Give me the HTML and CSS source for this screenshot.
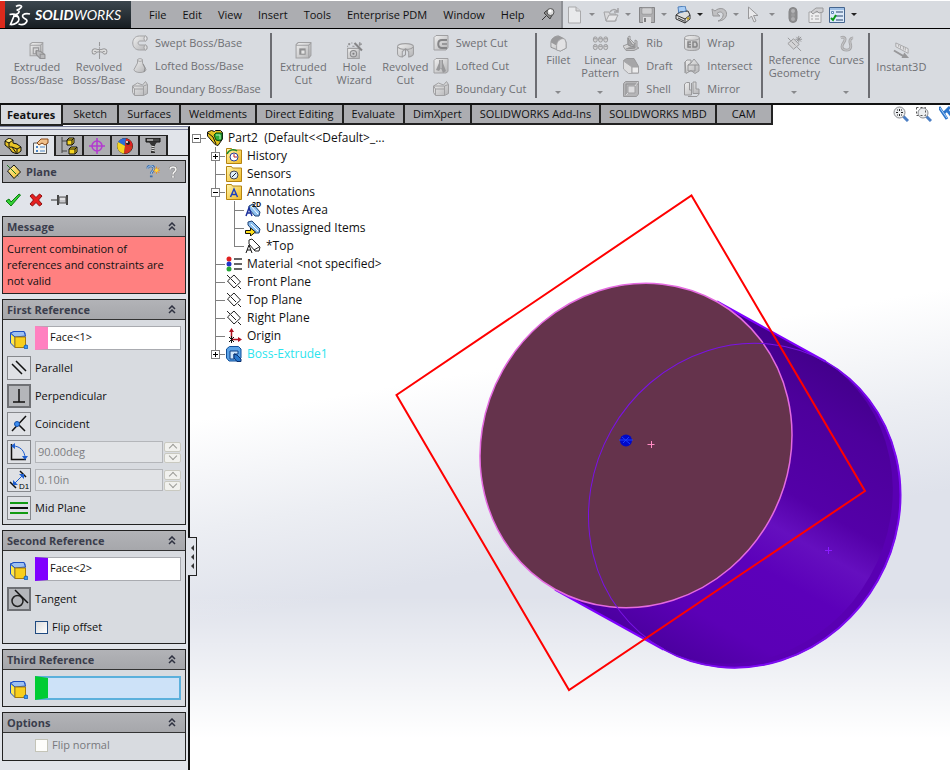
FILE: index.html
```html
<!DOCTYPE html>
<html lang="en">
<head>
  <meta charset="utf-8" />
  <meta name="viewport" content="width=device-width, initial-scale=1.0" />
  <title>SOLIDWORKS</title>
  <link rel="stylesheet" href="styles.css">
</head>
<body>

  <!-- icon sprite -->
  <svg class="sprite" aria-hidden="true">
    <defs>
      <linearGradient id="gGrey" x1="0" y1="0" x2="1" y2="1">
        <stop offset="0" stop-color="#f0f0f0" /><stop offset="1" stop-color="#b4b4b6" />
      </linearGradient>
      <linearGradient id="gGold" x1="0" y1="0" x2="1" y2="1">
        <stop offset="0" stop-color="#fff6b0" /><stop offset="1" stop-color="#f0b820" />
      </linearGradient>
    </defs>

    <symbol id="extrude" viewBox="0 0 16 16"><path d="M1 2l2-1.500h10v11l-2 1.500H1zM1 3h10v10M11 3l2-2" fill="url(#gGrey)" stroke="#a3a3a5"/><path d="M4 5.500h5v3H6.500V11H4z" fill="#d8d8da" stroke="#98989a"/><path d="M7 8l4 1 4 3v3.500h-4.500L7 12z" fill="#b9b9bb" stroke="#929294"/><path d="M10.500 15.500v-4h4.500" fill="none" stroke="#929294"/></symbol>
    <symbol id="revolve" viewBox="0 0 16 16"><path d="M8 0v4M8 5v1M8 11v5" stroke="#98989a"/><path d="M1 9c0-3 3-3 5-2h4c2-1 5-1 5 2s-3 3-4 1c-1-1-5-1-6 0-1 2-4 2-4-1z" fill="#ddd" stroke="#9a9a9c"/><path d="M8 6v5M3 9h2M11 9h2" stroke="#9a9a9c"/></symbol>
    <symbol id="swept" viewBox="0 0 16 16"><path d="M13.500 1H7.500C-1.500 1-1.500 15 7.500 15h6c2 0 2-5 0-5H8c-2.500 0-2.500-4 0-4h5.500c2-1 2-4 0-5z" fill="url(#gGrey)" stroke="#a2a2a4"/><ellipse cx="13.500" cy="12.500" rx="1.500" ry="2.500" fill="#ddd" stroke="#a2a2a4"/><ellipse cx="13.500" cy="3.500" rx="1.500" ry="2.500" fill="#e6e6e8" stroke="#a2a2a4"/></symbol>
    <symbol id="lofted" viewBox="0 0 16 16"><path d="M5.500 2v3L2 11.500c0 4 12 4 12 0L10.500 5V2z" fill="url(#gGrey)" stroke="#a2a2a4"/><ellipse cx="8" cy="2" rx="2.500" ry="1.300" fill="#e8e8e8" stroke="#a2a2a4"/><path d="M11 6l2 4-1 4" fill="none" stroke="#8f8f91"/></symbol>
    <symbol id="boundary" viewBox="0 0 16 16"><path d="M.5 5h11v9.500h-9l-2-3zM11.500 5l4-1.500v9l-4 2zM.5 5l5-3 5 2 3-3.500 2 3" fill="url(#gGrey)" stroke="#a0a0a2"/><path d="M2.500 14V8h9M.5 5l2 3" fill="none" stroke="#a0a0a2"/></symbol>
    <symbol id="cut" viewBox="0 0 16 16"><path d="M1 2.500L3 .5h12v12L13 15H1z" fill="url(#gGrey)" stroke="#a0a0a2"/><path d="M1 3h12v12M13 3l2-2" fill="none" stroke="#a0a0a2"/><path d="M4 6h6v6H4z" fill="#8f8f91"/><path d="M6 8h3v3H6z" fill="#e4e4e4"/></symbol>
    <symbol id="hole" viewBox="0 0 16 16"><path d="M1.500 6h11v9.500h-11z" fill="url(#gGrey)" stroke="#a0a0a2"/><circle cx="7" cy="11" r="3" fill="#c8c8ca" stroke="#8b8b8d"/><circle cx="7" cy="11" r="1" fill="#7d7d7f"/><path d="M8 1l7 7" stroke="#858587" stroke-width="2"/><path d="M2 2h2M3 1v2M6 4h2M12 2h3M5 1h1M1 4h1M13 0v4" stroke="#8d8d8f"/></symbol>
    <symbol id="revcut" viewBox="0 0 16 16"><path d="M.5 4.500c0-4 15-4 15 0V11c0 2-3 3-4.500 3V9L8 6.500 5 9v5C3 14 .5 13 .5 11z" fill="url(#gGrey)" stroke="#a0a0a2"/><path d="M1 5c2 2 5 2 7 1.500M15 5c-1 1.500-4 2-7 1.500V12l-3 2" fill="none" stroke="#98989a"/></symbol>
    <symbol id="sweptcut" viewBox="0 0 16 16"><path d="M1 2.500L3 .5h12v12L13 15H1z" fill="url(#gGrey)" stroke="#a0a0a2"/><path d="M14 5H9c-5 0-5 8 0 8h5" fill="none" stroke="#858587" stroke-width="2"/><path d="M14 9H9" stroke="#98989a" stroke-width="2"/></symbol>
    <symbol id="loftedcut" viewBox="0 0 16 16"><path d="M1 2.500L3 .5h12v13L13 15H1z" fill="url(#gGrey)" stroke="#a0a0a2"/><path d="M6 2h4v3l3 8-3 2-2-5-2 3-3-1 3-7z" fill="#98989a"/><path d="M8 2v8" stroke="#d0d0d2"/></symbol>
    <symbol id="fillet" viewBox="0 0 18 18"><path d="M1 8c0-4 4-7 8-7l6 3c1 1 2 3 2 5v5l-6 3-10-4z" fill="url(#gGrey)" stroke="#929294"/><path d="M1 8c0-4 4-7 8-7l6 3c-4-1-8 3-8 7z" fill="#9a9a9c"/><path d="M7 11c0-4 4-8 8-7 1 1 2 3 2 5v5l-6 3-4-1z" fill="#e2e2e4" stroke="#a2a2a4"/></symbol>
    <symbol id="pattern" viewBox="0 0 18 16"><g fill="#d2d2d4" stroke="#98989a"><rect x="1.500" y="1" width="4" height="5.500" rx="2"/><rect x="7" y="1" width="4" height="5.500" rx="2"/><rect x="12.500" y="1" width="4" height="5.500" rx="2"/><rect x="1.500" y="9" width="4" height="5.500" rx="2"/><rect x="7" y="9" width="4" height="5.500" rx="2"/><rect x="12.500" y="9" width="4" height="5.500" rx="2"/></g><path d="M2 3h3M7.500 3h3M13 3h3M2 11h3M7.500 11h3M13 11h3" stroke="#98989a"/></symbol>
    <symbol id="rib" viewBox="0 0 16 16"><path d="M0 11l5-2V2l2-1v3l5 5v-4l2 1v6l2 1-5 2.500H3z" fill="url(#gGrey)" stroke="#9a9a9c"/><path d="M5 3v7l6 2zM12 8v5l-9 1" fill="#a4a4a6" stroke="#8f8f91"/></symbol>
    <symbol id="draft" viewBox="0 0 16 16"><path d="M.5 2.500l3-2H11l4.500 8v6.500H9L.5 5z" fill="#a6a6a8" stroke="#98989a"/><path d="M.5 3v8l5 4.500H9V9z" fill="#dededf" stroke="#a8a8aa"/><path d="M9 9h6.500v6H9z" fill="#ececed" stroke="#a2a2a4"/></symbol>
    <symbol id="shell" viewBox="0 0 16 16"><path d="M.5 2.500l2-2h13v12.500l-2 2.500H.5z" fill="#b5b5b7" stroke="#98989a"/><path d="M3 3h12M3 3v11" stroke="#8f8f91"/><path d="M5 5h7v7H5z" fill="#dcdcde" stroke="#a0a0a2"/><path d="M3 14l2-2M15 1l-3 4" stroke="#d8d8da"/></symbol>
    <symbol id="wrap" viewBox="0 0 16 16"><path d="M.5 3c0-3.500 15-3.500 15 0v10c0 3.500-15 3.500-15 0z" fill="url(#gGrey)" stroke="#a0a0a2"/><path d="M.5 3c0 3 15 3 15 0" fill="none" stroke="#a0a0a2"/><path d="M7 7H4v5h3M4 9.500h3M9 7h3l1 2v2l-1 1H9z" fill="none" stroke="#858587" stroke-width="1.500"/></symbol>
    <symbol id="intersect" viewBox="0 0 16 16"><path d="M1 4l2-2h4v3l3-4 5 6v6l-4 2.500-4-3-5 3z" fill="url(#gGrey)" stroke="#9a9a9c"/><path d="M1 4v11M4 13V7h7v6zM4 7l3-2M11 7l4 0" fill="none" stroke="#929294"/></symbol>
    <symbol id="mirror" viewBox="0 0 16 16"><path d="M.5 3l2-1.500h3V9h2v5h-7zM9 1h3v7h3v4.500H9z" fill="url(#gGrey)" stroke="#98989a"/><path d="M4 15.500h9l2.500-3M7.500 2v11" stroke="#98989a" fill="none"/></symbol>
    <symbol id="refgeo" viewBox="0 0 18 18"><path d="M2 9l6-5 6 6-6 5z" fill="#d4d4d6" stroke="#98989a"/><path d="M2 3l3 3M6 7l4 4M12 13l4 4M13.500 1v7M10 4.500h7M11 2l5 5M16 2l-5 5" stroke="#949496"/></symbol>
    <symbol id="curves" viewBox="0 0 18 18"><path d="M3 3c4-2 6 1 3 5s-2 8 3 8 5-4 4-7 0-6 3-6" fill="none" stroke="#a6a6a8" stroke-width="3"/><path d="M3 3c4-2 6 1 3 5s-2 8 3 8 5-4 4-7 0-6 3-6" fill="none" stroke="#cdcdcf"/></symbol>
    <symbol id="instant" viewBox="0 0 18 18"><path d="M3 1l13 6v5L3 5zM6 3v2M8 4v3M11 5v3M13 6v3" fill="#e4e4e6" stroke="#a6a6a8"/><path d="M1 9l10 6" stroke="#98989a" stroke-width="2"/><path d="M12 11l5 6H9z" fill="#98989a"/></symbol>

    <symbol id="new" viewBox="0 0 16 18"><path d="M1.500 1H9l4.500 4v12h-12z" fill="#e9eaec" stroke="#a9a9ab"/><path d="M9 1v4h4.500" fill="#d4d4d6" stroke="#a9a9ab"/></symbol>
    <symbol id="open" viewBox="0 0 18 16"><path d="M1 5h5l1 2h6v7H3z" fill="#d9d9db" stroke="#a3a3a5"/><path d="M3 14l3-6h9l-3 6z" fill="#e6e6e8" stroke="#a3a3a5"/><path d="M7 5c2-3 5-3 7-1M15 1v4h-4" fill="none" stroke="#a3a3a5" stroke-width="1.500"/></symbol>
    <symbol id="save" viewBox="0 0 16 16"><path d="M.5.500h15v15h-15z" fill="#aeaeb0" stroke="#858587"/><path d="M3 1h10v6H3z" fill="#e9e9ea" stroke="#98989a"/><path d="M4 3h8M4 5h8" stroke="#b4b4b6"/><path d="M4 10h8v6H4z" fill="#dcdcde"/><path d="M5 11h2v4H5z" fill="#7d7d7f"/></symbol>
    <symbol id="print" viewBox="0 0 16 18"><path d="M3 1l7-1 2 7-8 2z" fill="#a8cdf5" stroke="#4f7fba"/><path d="M1 9l4-3 8-1 2 4v4l-5 4-9-4z" fill="#ddd" stroke="#333"/><path d="M1 9l9 4 5-4M10 13v4M3 12l6 3" fill="none" stroke="#333"/><path d="M4 7l7-2" stroke="#4f7fba"/><path d="M12 13l2-1" stroke="#c6a41a" stroke-width="2"/></symbol>
    <symbol id="undo" viewBox="0 0 16 16"><path d="M1 2l1 7h7L6 6.500c3-3 7-1 6 2.500-.5 2-2 4-5 5 6 0 9-4 8.500-8C14.500 1 8 0 4 4z" fill="#c0c0c2" stroke="#98989a"/></symbol>
    <symbol id="pointer" viewBox="0 0 12 17"><path d="M1.500 1v12l3-3 2.500 6 2-1-2.500-5.500H11z" fill="#e9e9eb" stroke="#98989a"/></symbol>
    <symbol id="light" viewBox="0 0 10 16"><rect x="1" y=".5" width="8" height="15" rx="4" fill="#8c8c8e" stroke="#858587"/><circle cx="5" cy="4" r="2" fill="#b4b4b6"/><circle cx="5" cy="8" r="2" fill="#9c9c9e"/><circle cx="5" cy="12" r="2" fill="#aeaeb0"/></symbol>
    <symbol id="props" viewBox="0 0 16 16"><path d="M1 5h12v10.500H1z" fill="#ededee" stroke="#a3a3a5"/><path d="M3 9h2M7 9h4M3 12h2M7 12h4" stroke="#a3a3a5"/><path d="M3 5l5-4h7v4l-4 1-2-2-4 3z" fill="#cfcfd1" stroke="#9a9a9c"/></symbol>
    <symbol id="options" viewBox="0 0 16 16"><path d="M.5.500h15v15H.5z" fill="#dceafa" stroke="#44658f"/><path d="M1 1h14v2H1z" fill="#9fc0e6"/><path d="M7 5h7M7 9h7M7 13h7" stroke="#26456d"/><path d="M2.500 4.500h2v2h-2z" fill="#fff" stroke="#5b83b5"/><path d="M2 11l2 2 3-5" fill="none" stroke="#0a9a18" stroke-width="2"/></symbol>
    <symbol id="pin" viewBox="0 0 14 16"><path d="M1 13l4-4" stroke="#333"/><path d="M3 6l6 6 1-2 2-3-4-4-3 1z" fill="#888" stroke="#444"/><circle cx="9.500" cy="5" r="3.500" fill="#ddd" stroke="#555"/><circle cx="9" cy="4" r="1.500" fill="#fff"/></symbol>

    <symbol id="zoomfit" viewBox="0 0 16 16"><path d="M10 10l5 5" stroke="#4c7fc4" stroke-width="3"/><circle cx="6.500" cy="6.500" r="5.500" fill="#eceef0" stroke="#8a8c90"/><path d="M6.500 3v2M6.500 8v2M3 6.500h2M8 6.500h2M4 4h1M8 4h1M4 9h1M8 9h1" stroke="#222"/></symbol>
    <symbol id="zoomarea" viewBox="0 0 16 16"><path d="M10 10l5 5" stroke="#4c7fc4" stroke-width="3"/><circle cx="7" cy="7" r="5" fill="#eceef0" stroke="#8a8c90"/><path d="M.5 1.500h9v8h-9z" fill="none" stroke="#555" stroke-dasharray="2 2"/></symbol>
    <symbol id="prevview" viewBox="0 0 16 16"><path d="M0 1l8 12M4 8l7-7M8 4l7 9" stroke="#2d76cc" stroke-width="3"/><path d="M1 2l7 10" stroke="#a9d0f8"/></symbol>

    <symbol id="part" viewBox="0 0 18 16"><path d="M1 3l4-3 4 2v3l4 1 4 3v4l-4 3-5-2-2-3-5-4z" fill="#e9c425" stroke="#111"/><path d="M1 3l4 2 4-3M5 5v4M8 9l5 2 4-2M13 11v5M5 9l3 0 5 7" fill="none" stroke="#111"/><path d="M2 3l3-2 3 1-3 2z" fill="#fff38a"/></symbol>
    <symbol id="proptab" viewBox="0 0 16 16"><path d="M.5 5h13v10.500H.5z" fill="#f4f4f0" stroke="#555"/><path d="M3 8h2v2H3zM3 12h2v2H3z" fill="#4a84c8"/><path d="M7 9h5M7 13h5" stroke="#4a84c8"/><path d="M4 5l4-4h7v4l-3 2-3-2-3 2z" fill="#f0c08a" stroke="#8a4a1a"/></symbol>
    <symbol id="config" viewBox="0 0 18 18"><path d="M2 0v16M2 4h5M2 14h5" stroke="#444"/><path d="M7 3l2-2h5v5l-2 2H7zM9 12l2-2h6v5l-2 2H9z" fill="#f5d422" stroke="#111"/><path d="M7 3h5v5M12 3l2-2M9 12h6v5M15 12l2-2" fill="none" stroke="#111"/></symbol>
    <symbol id="target" viewBox="0 0 16 16"><circle cx="8" cy="8" r="5" fill="none" stroke="#b33ad0" stroke-width="1.500"/><path d="M8 0v16M0 8h16" stroke="#b33ad0" stroke-width="1.500"/></symbol>
    <symbol id="ball" viewBox="0 0 16 16"><circle cx="8" cy="8" r="7.500" fill="#25a038" stroke="#222"/><path d="M8 8L1 4C4 0 8 0 9 .5z" fill="#2e6ad8"/><path d="M9 .5c5 1 7 5 6.500 8L8 8z" fill="#e02020"/><path d="M1 4l7 4-1 7.500C1 15-1 9 1 4z" fill="#f5d422"/><path d="M8 8l7.500.5C15 13 11 16 7 15.500z" fill="#d83020"/><circle cx="11" cy="5" r="2" fill="#222"/><circle cx="10" cy="4" r="1" fill="#fff"/></symbol>
    <symbol id="bolt" viewBox="0 0 16 16"><path d="M1 0h14v4H1z" fill="#444" stroke="#111"/><path d="M2 1h6v2H2z" fill="#999"/><path d="M4 4h8l-2 3v8H6V7z" fill="#333"/><path d="M6 8l4 1M6 10l4 1M6 12l4 1" stroke="#eee"/></symbol>

    <symbol id="plane" viewBox="0 0 16 16"><path d="M1 1l14 14" stroke="#1a7a1a" stroke-dasharray="4 8"/><path d="M8 1l6.500 7L8 14.500 1.500 7z" fill="url(#gGold)" stroke="#111"/><path d="M5 5l5 5" stroke="#1a7a1a"/></symbol>
    <symbol id="helpnew" viewBox="0 0 16 16"><path d="M2 4c0-4 7-4 7 0 0 3-3 3-3 6M6 12v2" fill="none" stroke="#3b6fae" stroke-width="3"/><path d="M2 4c0-4 7-4 7 0 0 3-3 3-3 6" fill="none" stroke="#cfe2f7"/><path d="M12 2v8M8 6h8M9 3l6 6M15 3L9 9" stroke="#f08a1a"/><circle cx="12" cy="6" r="2" fill="#ffd83a"/></symbol>
    <symbol id="help" viewBox="0 0 12 16"><path d="M2.500 5c0-4 7-4 7 0 0 3-3.500 2-3.500 6M6 12.500v2.500" fill="none" stroke="#777" stroke-width="3"/><path d="M2.500 5c0-4 7-4 7 0 0 3-3.500 2-3.500 6M6 12.500v2.500" fill="none" stroke="#f2f2f2" stroke-width="2"/></symbol>
    <symbol id="ok" viewBox="0 0 16 14"><path d="M1 8l3-2 2 3 8-8 1.500 1L6 13z" fill="#35d335" stroke="#0c7a12"/></symbol>
    <symbol id="cancel" viewBox="0 0 14 14"><path d="M1 3l2.500-2L7 4.500 10.500 1 13 3 9.500 7l3.500 4-2.500 2L7 9.500 3.500 13 1 11l3.500-4z" fill="#e62020" stroke="#8e0c0c"/></symbol>
    <symbol id="pushpin" viewBox="0 0 18 12"><path d="M0 6h7" stroke="#333"/><path d="M7 1v10M16 1v10" stroke="#444" stroke-width="2"/><path d="M8 3h7v6H8z" fill="#c4c4c8" stroke="#555"/><path d="M9 5h5" stroke="#fff"/></symbol>
    <symbol id="chev" viewBox="0 0 8 9"><path d="M1 4l3-3 3 3M1 8l3-3 3 3" fill="none" stroke="#2e3140" stroke-width="1.500"/></symbol>

    <symbol id="cube" viewBox="0 0 18 18"><path d="M.5 2L4 .5h10l1 1.500V13" fill="#8db4ee" stroke="#1d4fc0"/><path d="M.5 2L5 6v10.500L.5 12z" fill="#ffe84a" stroke="#1d4fc0"/><path d="M.5 2L4 .5h10L15.500 5 5 6z" fill="#9cc0f2" stroke="#1d4fc0"/><path d="M5 6h10.500v10.500H5z" fill="#f8cf1c" stroke="#a87c08"/><circle cx="16" cy="16" r="2" fill="#3d98f2" stroke="#1a5fb8"/></symbol>
    <symbol id="parallel" viewBox="0 0 20 20"><path d="M3 6l10 10M7 3l10 10" stroke="#111" stroke-width="1.500"/></symbol>
    <symbol id="perp" viewBox="0 0 20 20"><path d="M10 3v13M4 16h12" stroke="#111" stroke-width="1.500"/></symbol>
    <symbol id="coincident" viewBox="0 0 20 20"><path d="M17 2L3 17M9 10l7 7" stroke="#111" stroke-width="1.500"/><circle cx="8" cy="10" r="2.500" fill="#3d8ef0" stroke="#124ea8"/></symbol>
    <symbol id="angle" viewBox="0 0 20 20"><path d="M2.500 2v15.500H17" fill="none" stroke="#111" stroke-width="1.500"/><path d="M4 4c7 0 12 5 12 12" fill="none" stroke="#1f5fcf"/><path d="M2 4l4-3v6zM16 18l-3-4h6z" fill="#1f5fcf"/></symbol>
    <symbol id="dist" viewBox="0 0 20 20"><path d="M1 12l6 6M11 1l6 6" stroke="#111" stroke-width="1.500"/><path d="M5 14l9-9" stroke="#1f5fcf"/><path d="M4 15v-5l5 5zM15 4v5l-5-5z" fill="#1f5fcf"/></symbol>
    <symbol id="mid" viewBox="0 0 20 20"><path d="M1 5h18M1 15h18" stroke="#129a12" stroke-width="2"/><path d="M1 10h18" stroke="#111" stroke-width="2"/></symbol>
    <symbol id="tangent" viewBox="0 0 20 20"><circle cx="8.500" cy="12" r="5.500" fill="none" stroke="#222" stroke-width="1.500"/><path d="M6 1l13 13" stroke="#111" stroke-width="1.500"/></symbol>

    <symbol id="t-part" viewBox="0 0 16 16"><path d="M.5 2l4-1.500 3 1 1-1h5l2 2V9L11 15.500 8 14.500.5 6z" fill="#e6c31f" stroke="#111"/><path d="M7 5l2-2h6v6l-2 2-4-1z" fill="#2fae3b" stroke="#0a4a10"/><path d="M9 5h4v4" fill="none" stroke="#b8f0bc"/><path d="M1 3l5 4 3 7" fill="none" stroke="#111"/></symbol>
    <symbol id="folder" viewBox="0 0 16 16"><path d="M.5.500h5l1 1.500h9v13.500H.5z" fill="url(#gGold)" stroke="#b48412"/></symbol>
    <symbol id="t-material" viewBox="0 0 16 16"><circle cx="3" cy="3" r="2.500" fill="#e02020"/><circle cx="3" cy="8" r="2.500" fill="#2034c8"/><circle cx="3" cy="13" r="2.500" fill="#28a838"/><path d="M8 3h8M8 8h8M8 13h8" stroke="#333" stroke-width="1.500"/></symbol>
    <symbol id="t-plane" viewBox="0 0 16 16"><path d="M8 1l6.500 7L8 14 1.500 7z" fill="#fff" stroke="#222"/><path d="M1 1l3 3M5 5l5 5M12 12l3 3" stroke="#222" /></symbol>
    <symbol id="t-origin" viewBox="0 0 16 16"><path d="M5.500 11V2M5.500 11.500H14" stroke="#b01020" stroke-width="1.500"/><path d="M3 4l2.500-4L8 4zM12 9l4 2.500-4 2.500z" fill="#b01020"/><path d="M3 9l5 5M8 9l-5 5M5.500 8v7" stroke="#111"/></symbol>
    <symbol id="t-boss" viewBox="0 0 16 16"><path d="M.5 3l3-2.500h9L15 3v9l-3 3H3L.5 12z" fill="#5ba2e6" stroke="#0f4f9a"/><path d="M4 5h8v3H8v5H4z" fill="#cfe6fb" stroke="#0f3f86"/><path d="M8 8l3 1 4 4v2.500h-4L8 12z" fill="#2776cc" stroke="#0b2f6e"/></symbol>
    <symbol id="t-note" viewBox="0 0 16 16"><path d="M4 4l4-2 7 8-1 4-4 0-6-7z" fill="#8ec0ee" stroke="#1b3f74"/><path d="M6 4l7 8" stroke="#fff"/><path d="M1 14l3-8 3 8M2 11h4" fill="none" stroke="#1a2f9c" stroke-width="1.500"/></symbol>
    <symbol id="t-unassigned" viewBox="0 0 16 16"><path d="M3 2l4-1 8 8-1 4-4 0-7-8z" fill="#8ec0ee" stroke="#1b3f74"/><path d="M6 4l7 7" stroke="#fff"/><path d="M.5 10.500h5V8l5 4-5 4v-2.500h-5z" fill="#ffe11a" stroke="#111"/></symbol>
    <symbol id="t-top" viewBox="0 0 16 16"><path d="M4 2l3-1 8 8-1 4-4 0-6-7z" fill="#fff" stroke="#222"/><path d="M9 12l5-3" stroke="#222"/><path d="M1 15l3-8 3 8M2 12h4" fill="none" stroke="#111"/></symbol>
  </svg>

  <header class="topbar">
    <div class="brand">
      <svg class="brand-mark" viewBox="0 0 22 22" aria-hidden="true"><path d="M7 2.500c3-2 7-1 5 1-1 1.500-3 2.500-4.500 2.500 3.500 0 3.500 3-.5 4.500M5 12l-3.500 8.500C6 21 10 18 10 15c0-2-2-3-6-3M.5 10.500c5-1 8.500.5 9.500 4.500M21 10c-4-1-7.500 0-7.500 2 0 3 6 3 4 6-1.500 2.500-5 3-8 2" fill="none" stroke="#fff" stroke-width="1.700"/></svg>
      <span class="brand-name"><b>SOLID</b>WORKS</span>
    </div>
    <nav class="menu">
      <a href="#">File</a>
      <a href="#">Edit</a>
      <a href="#">View</a>
      <a href="#">Insert</a>
      <a href="#">Tools</a>
      <a href="#">Enterprise PDM</a>
      <a href="#">Window</a>
      <a href="#">Help</a>
      <button class="plain" aria-label="Pin menu"><svg width="14" height="16"><use href="#pin"/></svg></button>
    </nav>
    <div class="quickbar">
      <button class="drop" aria-label="New"><svg width="16" height="18"><use href="#new"/></svg></button>
      <button class="drop" aria-label="Open"><svg width="18" height="16"><use href="#open"/></svg></button>
      <button class="drop" aria-label="Save"><svg width="16" height="16"><use href="#save"/></svg></button>
      <button class="drop dark" aria-label="Print"><svg width="16" height="18"><use href="#print"/></svg></button>
      <button class="drop" aria-label="Undo"><svg width="16" height="16"><use href="#undo"/></svg></button>
      <button class="drop" aria-label="Select"><svg width="12" height="17"><use href="#pointer"/></svg></button>
      <button class="plain single" aria-label="Rebuild"><svg width="10" height="16"><use href="#light"/></svg></button>
      <button class="plain single" aria-label="File properties"><svg width="16" height="16"><use href="#props"/></svg></button>
      <button class="drop dark" aria-label="Options"><svg width="16" height="16"><use href="#options"/></svg></button>
    </div>
  </header>

  <div class="ribbon">
    <div class="group">
      <button class="big wide"><svg width="17" height="17"><use href="#extrude"/></svg>Extruded<br>Boss/Base</button>
      <button class="big wide"><svg width="17" height="17"><use href="#revolve"/></svg>Revolved<br>Boss/Base</button>
      <div class="stack">
        <button class="small"><svg width="16" height="16"><use href="#swept"/></svg>Swept Boss/Base</button>
        <button class="small"><svg width="16" height="16"><use href="#lofted"/></svg>Lofted Boss/Base</button>
        <button class="small"><svg width="16" height="16"><use href="#boundary"/></svg>Boundary Boss/Base</button>
      </div>
    </div>
    <div class="group">
      <button class="big"><svg width="17" height="17"><use href="#cut"/></svg>Extruded<br>Cut</button>
      <button class="big"><svg width="17" height="17"><use href="#hole"/></svg>Hole<br>Wizard</button>
      <button class="big"><svg width="17" height="17"><use href="#revcut"/></svg>Revolved<br>Cut</button>
      <div class="stack">
        <button class="small"><svg width="16" height="16"><use href="#sweptcut"/></svg>Swept Cut</button>
        <button class="small"><svg width="16" height="16"><use href="#loftedcut"/></svg>Lofted Cut</button>
        <button class="small"><svg width="16" height="16"><use href="#boundary"/></svg>Boundary Cut</button>
      </div>
    </div>
    <div class="group tight">
      <button class="big more narrow"><svg width="17" height="17"><use href="#fillet"/></svg>Fillet</button>
      <button class="big more narrow"><svg width="17" height="17"><use href="#pattern"/></svg>Linear<br>Pattern</button>
      <div class="stack first">
        <button class="small"><svg width="16" height="16"><use href="#rib"/></svg>Rib</button>
        <button class="small"><svg width="16" height="16"><use href="#draft"/></svg>Draft</button>
        <button class="small"><svg width="16" height="16"><use href="#shell"/></svg>Shell</button>
      </div>
      <div class="stack">
        <button class="small"><svg width="16" height="16"><use href="#wrap"/></svg>Wrap</button>
        <button class="small"><svg width="16" height="16"><use href="#intersect"/></svg>Intersect</button>
        <button class="small"><svg width="16" height="16"><use href="#mirror"/></svg>Mirror</button>
      </div>
    </div>
    <div class="group tight last">
      <button class="big more wide"><svg width="17" height="17"><use href="#refgeo"/></svg>Reference<br>Geometry</button>
      <button class="big more narrow"><svg width="17" height="17"><use href="#curves"/></svg>Curves</button>
    </div>
    <div class="group tight">
      <button class="big wide"><svg width="17" height="17"><use href="#instant"/></svg>Instant3D</button>
    </div>
  </div>

  <div class="tabrow">
    <div class="tabs">
      <button class="active">Features</button>
      <button>Sketch</button>
      <button>Surfaces</button>
      <button>Weldments</button>
      <button>Direct Editing</button>
      <button>Evaluate</button>
      <button>DimXpert</button>
      <button>SOLIDWORKS Add-Ins</button>
      <button>SOLIDWORKS MBD</button>
      <button>CAM</button>
    </div>
    <div class="viewtools">
      <button class="plain" aria-label="Zoom to fit"><svg width="16" height="16"><use href="#zoomfit"/></svg></button>
      <button class="plain" aria-label="Zoom to area"><svg width="16" height="16"><use href="#zoomarea"/></svg></button>
      <button class="plain" aria-label="Previous view"><svg width="16" height="16"><use href="#prevview"/></svg></button>
    </div>
  </div>

  <div class="workspace">
    <aside class="panel">
      <div class="panel-tabs">
        <button aria-label="Feature manager"><svg width="18" height="16"><use href="#part"/></svg></button>
        <button class="active" aria-label="Property manager"><svg width="16" height="16"><use href="#proptab"/></svg></button>
        <button aria-label="Configurations"><svg width="18" height="18"><use href="#config"/></svg></button>
        <button aria-label="DimXpert manager"><svg width="16" height="16"><use href="#target"/></svg></button>
        <button aria-label="Display manager"><svg width="16" height="16"><use href="#ball"/></svg></button>
        <button aria-label="CAM manager"><svg width="16" height="16"><use href="#bolt"/></svg></button>
      </div>

      <div class="panel-title">
        <svg width="16" height="16"><use href="#plane"/></svg>
        <h1>Plane</h1>
        <button class="plain" aria-label="What's new"><svg width="14" height="14"><use href="#helpnew"/></svg></button>
        <button class="plain" aria-label="Help"><svg width="10" height="14"><use href="#help"/></svg></button>
      </div>

      <div class="confirm">
        <button class="plain" aria-label="OK"><svg width="16" height="14"><use href="#ok"/></svg></button>
        <button class="plain" aria-label="Cancel"><svg width="14" height="14"><use href="#cancel"/></svg></button>
        <button class="plain" aria-label="Keep visible"><svg width="18" height="12"><use href="#pushpin"/></svg></button>
      </div>

      <section class="box">
        <h2>Message <svg width="8" height="9"><use href="#chev"/></svg></h2>
        <p class="message">Current combination of references and constraints are not valid</p>
      </section>

      <section class="box">
        <h2>First Reference <svg width="8" height="9"><use href="#chev"/></svg></h2>
        <div class="body">
          <div class="row">
            <svg class="cube" width="18" height="18"><use href="#cube"/></svg>
            <input class="pick pink" type="text" value="Face&lt;1&gt;" aria-label="First reference">
          </div>
          <div class="row"><button class="tool" id="parallelBtn"><svg width="20" height="20"><use href="#parallel"/></svg></button><label for="parallelBtn">Parallel</label></div>
          <div class="row"><button class="tool on" id="perpBtn"><svg width="20" height="20"><use href="#perp"/></svg></button><label for="perpBtn">Perpendicular</label></div>
          <div class="row"><button class="tool" id="coincidentBtn"><svg width="20" height="20"><use href="#coincident"/></svg></button><label for="coincidentBtn">Coincident</label></div>
          <div class="row">
            <button class="tool" aria-label="Angle"><svg width="20" height="20"><use href="#angle"/></svg></button>
            <input class="value" type="text" value="90.00deg" aria-label="Angle value" disabled>
            <div class="spin"><button aria-label="Increase angle" disabled></button><button class="down" aria-label="Decrease angle" disabled></button></div>
          </div>
          <div class="row">
            <button class="tool" aria-label="Distance"><svg width="20" height="20"><use href="#dist"/><text class="dim" x="10" y="19">D1</text></svg></button>
            <input class="value" type="text" value="0.10in" aria-label="Distance value" disabled>
            <div class="spin"><button aria-label="Increase distance" disabled></button><button class="down" aria-label="Decrease distance" disabled></button></div>
          </div>
          <div class="row"><button class="tool" id="midBtn"><svg width="20" height="20"><use href="#mid"/></svg></button><label for="midBtn">Mid Plane</label></div>
        </div>
      </section>

      <section class="box">
        <h2>Second Reference <svg width="8" height="9"><use href="#chev"/></svg></h2>
        <div class="body">
          <div class="row">
            <svg class="cube" width="18" height="18"><use href="#cube"/></svg>
            <input class="pick purple" type="text" value="Face&lt;2&gt;" aria-label="Second reference">
          </div>
          <div class="row"><button class="tool on" id="tangentBtn"><svg width="20" height="20"><use href="#tangent"/></svg></button><label for="tangentBtn">Tangent</label></div>
          <div class="row check"><input type="checkbox" id="flipOffset"><label for="flipOffset">Flip offset</label></div>
        </div>
      </section>

      <section class="box">
        <h2>Third Reference <svg width="8" height="9"><use href="#chev"/></svg></h2>
        <div class="body">
          <div class="row">
            <svg class="cube" width="18" height="18"><use href="#cube"/></svg>
            <input class="pick green" type="text" value="" aria-label="Third reference">
          </div>
        </div>
      </section>

      <section class="box">
        <h2>Options <svg width="8" height="9"><use href="#chev"/></svg></h2>
        <div class="body slim">
          <div class="row check"><input type="checkbox" id="flipNormal" disabled><label for="flipNormal">Flip normal</label></div>
        </div>
      </section>

      <button class="collapse" aria-label="Collapse panel"><i></i><i></i><i></i></button>
    </aside>

    <main class="viewport">
      <svg class="model" viewBox="190 126 760 644" preserveAspectRatio="xMinYMin slice" role="img" aria-label="Cylinder with plane preview">
        <defs>
          <linearGradient id="body" gradientUnits="userSpaceOnUse" x1="771" y1="331" x2="609" y2="619">
            <stop offset="0" stop-color="#43008c" />
            <stop offset=".15" stop-color="#4d009c" />
            <stop offset=".4" stop-color="#5400a8" />
            <stop offset=".51" stop-color="#650fbf" />
            <stop offset=".64" stop-color="#5c00ba" />
            <stop offset=".85" stop-color="#5b00b6" />
            <stop offset="1" stop-color="#4c00a0" />
          </linearGradient>
        </defs>
        <g fill="url(#body)">
          <ellipse cx="0" cy="0" rx="165" ry="153" transform="translate(744.500 505.500) rotate(-60.600)" fill="#5900b2" stroke="#7f00ff" stroke-width="2" />
          <path d="M717 301.500L825.500 361.500A165.500 153 -60.600 0 1 663.500 649.500L555 589.500z" />
          <path d="M717 301.500L825.500 361.500M663.500 649.500L555 589.500" stroke="#7f00ff" stroke-width="2" />
        </g>
        <ellipse cx="636" cy="445.500" rx="165" ry="153" transform="rotate(-60.600 636 445.500)" fill="#65334c" stroke="#e46be0" stroke-width="1.500" />
        <ellipse cx="744.500" cy="505.500" rx="165" ry="153" transform="rotate(-60.600 744.500 505.500)" fill="none" stroke="#7a12e6" />
        <path d="M691.500 195.500L865 491 569 690 396.500 395z" fill="none" stroke="#ff0000" stroke-width="2" />
        <circle cx="626" cy="440.500" r="6" fill="#0008c8" />
        <path d="M619 440h14M622 437l8 7M629 437l-6 6" stroke="#1a3cff" />
        <path d="M647.500 444.500h7M651.500 441v7" stroke="#ff8cc4" />
        <path d="M825 550.500h7M828.500 547v7" stroke="#8a1cff" />
      </svg>

      <ul class="tree">
        <li>
          <div class="node"><button class="toggle" aria-label="Collapse Part2"></button><svg width="16" height="16"><use href="#t-part"/></svg>Part2&nbsp; (Default&lt;&lt;Default&gt;_...</div>
          <ul>
            <li><div class="node"><button class="toggle plus" aria-label="Expand History"></button><svg width="16" height="16"><use href="#folder"/><circle cx="8" cy="9" r="4" fill="#fff" stroke="#2a3f9c"/><path d="M8 6v3h3" fill="none" stroke="#c02020"/><path d="M1 6c2-5 8-5 10-3" fill="none" stroke="#1a8a2a" stroke-width="1.500"/></svg>History</div></li>
            <li><div class="node"><svg width="16" height="16"><use href="#folder"/><circle cx="8" cy="9" r="4" fill="#dff0fa" stroke="#445"/><path d="M6 11l4-4" stroke="#223"/></svg>Sensors</div></li>
            <li>
              <div class="node"><button class="toggle" aria-label="Collapse Annotations"></button><svg width="16" height="16"><use href="#folder"/><path d="M4.500 13L8 5l3.500 8M6 10.500h4" fill="none" stroke="#1a3fc0" stroke-width="1.500"/></svg>Annotations</div>
              <ul>
                <li><div class="node"><svg width="16" height="16"><use href="#t-note"/></svg>Notes Area<span class="tag">2D</span></div></li>
                <li><div class="node"><svg width="16" height="16"><use href="#t-unassigned"/></svg>Unassigned Items</div></li>
                <li><div class="node"><svg width="16" height="16"><use href="#t-top"/></svg>*Top</div></li>
              </ul>
            </li>
            <li><div class="node"><svg width="16" height="16"><use href="#t-material"/></svg>Material &lt;not specified&gt;</div></li>
            <li><div class="node"><svg width="16" height="16"><use href="#t-plane"/></svg>Front Plane</div></li>
            <li><div class="node"><svg width="16" height="16"><use href="#t-plane"/></svg>Top Plane</div></li>
            <li><div class="node"><svg width="16" height="16"><use href="#t-plane"/></svg>Right Plane</div></li>
            <li><div class="node"><svg width="16" height="16"><use href="#t-origin"/></svg>Origin</div></li>
            <li><div class="node selected"><button class="toggle plus" aria-label="Expand Boss-Extrude1"></button><svg width="16" height="16"><use href="#t-boss"/></svg>Boss-Extrude1</div></li>
          </ul>
        </li>
      </ul>
    </main>
  </div>

</body>
</html>
```

FILE: styles.css
```css
* {
  box-sizing: border-box;
}

body {
  margin: 0;
  min-height: 100vh;
  display: flex;
  flex-direction: column;
  font-family: "Open Sans", "Noto Sans", sans-serif;
  font-size: 11px;
  line-height: 16px;
  color: #111;
  background: #fff;
  overflow-x: hidden;
}

button,
input {
  font: inherit;
  color: inherit;
}

button {
  padding: 0;
  border: none;
  background: none;
}

svg {
  display: block;
  flex-shrink: 0;
}

.sprite {
  position: absolute;
  width: 0;
  height: 0;
}

.plain {
  display: flex;
  align-items: center;
}

/* top bar */
.topbar {
  display: flex;
  height: 29px;
  border-top: 1px solid #fff;
  border-bottom: 1px solid #000;
  background: #d8dbe0;
}

.brand {
  display: flex;
  align-items: center;
  gap: 4px;
  width: 131px;
  padding-left: 4px;
  border-left: 5px solid #dc2a1c;
  background: linear-gradient(#3c474e, #171d22);
  color: #fff;
}

.brand-mark {
  width: 22px;
  height: 22px;
}

.brand-name {
  font-family: Lato, sans-serif;
  font-size: 14px;
  font-style: italic;
}

.menu {
  display: flex;
  align-items: center;
  gap: 16px;
  width: 432px;
  padding-left: 18px;
  background: #acadb1;
  border-right: 2px solid #8e9095;
}

.menu a {
  color: #111;
  text-decoration: none;
  white-space: nowrap;
}

.quickbar {
  display: flex;
  align-items: center;
  padding-left: 2px;
}

.drop {
  display: flex;
  align-items: center;
  justify-content: space-between;
  width: 36px;
  padding: 0 6px 0 2px;
}

.drop::after,
.more::after {
  content: "";
  border: 3px solid transparent;
  border-top-color: #88898c;
  border-bottom: none;
}

.drop.dark::after {
  border-top-color: #222;
}

.single {
  width: 23px;
  justify-content: center;
}

/* ribbon */
.ribbon {
  display: flex;
  height: 76px;
  padding: 4px 0 5px;
  background: #d8dbe0;
  border-bottom: 2px solid #111;
  color: #6f7074;
}

.group {
  display: flex;
  padding: 0 9px 0 6px;
  border-right: 2px solid #6c6d72;
}

.group.tight {
  padding-left: 0;
}

.group.last {
  padding-right: 1px;
}

.group:last-child {
  border-right: none;
}

.big {
  display: flex;
  flex-direction: column;
  align-items: center;
  width: 51px;
  padding-top: 9px;
  line-height: 13px;
  text-align: center;
}

.big.wide {
  width: 62px;
}

.big.narrow {
  width: 42px;
}

.big svg {
  margin-bottom: 1px;
}

.big.more {
  padding-top: 2px;
}

.more::after {
  margin: auto 0 4px;
}

.stack {
  display: flex;
  flex-direction: column;
  margin: -2px 0 0 2px;
}

.stack.first {
  width: 59px;
}

.small {
  display: flex;
  flex-shrink: 0;
  align-items: center;
  gap: 7px;
  height: 23px;
  white-space: nowrap;
}

/* command tabs */
.tabrow {
  display: flex;
  justify-content: space-between;
  height: 21px;
  overflow: hidden;
}

.tabs {
  display: flex;
}

.tabs button {
  height: 20px;
  min-width: 56px;
  padding: 0 8px;
  line-height: 16px;
  white-space: nowrap;
  background: #acadb1;
  border-right: 2px solid #222;
  border-bottom: 2px solid #222;
}

.tabs button.active {
  height: 21px;
  padding: 0 6px;
  background: #d8dbe0;
  border-left: 1px solid #222;
  font-weight: bold;
}

.viewtools {
  display: flex;
  gap: 7px;
  margin: -4px -5px 0 0;
}

/* property panel */
.workspace {
  flex: 1;
  display: flex;
}

.panel {
  position: relative;
  width: 190px;
  flex-shrink: 0;
  padding: 2px 2px 0;
  background: #e1e4ea;
  border-top: 1px solid #7b809c;
  border-right: 2px solid #111;
}

.panel-tabs {
  display: flex;
  height: 27px;
  padding-top: 5px;
  margin: 0 -2px 4px;
  border-top: 1px solid #7b809c;
  border-bottom: 1px solid #222;
}

.panel-tabs button {
  display: flex;
  align-items: center;
  justify-content: center;
  width: 28px;
  background: #acadb1;
  border-top: 1px solid #222;
  border-right: 2px solid #222;
}

.panel-tabs button.active {
  background: #e1e4ea;
  margin-bottom: -1px;
}

.panel-title {
  display: flex;
  align-items: center;
  gap: 8px;
  height: 23px;
  padding: 0 7px 0 3px;
  background: #acadb1;
  border: 1px solid #222;
}

.panel-title h1 {
  flex: 1;
  margin: 0 0 0 -4px;
  font-size: 11px;
  color: #3a3d4c;
}

.confirm {
  display: flex;
  align-items: center;
  gap: 8px;
  height: 33px;
  padding-left: 3px;
}

.box {
  margin-bottom: 5px;
  border: 1px solid #222;
  background: #d8dbe0;
}

.box h2 {
  display: flex;
  align-items: center;
  justify-content: space-between;
  height: 20px;
  margin: 0;
  padding: 0 9px 0 4px;
  font-size: 11px;
  color: #3a3d4c;
  background: linear-gradient(#b2b3b7, #a6a7ab);
  border-bottom: 1px solid #333;
}

.message {
  margin: 0;
  padding: 4px;
  background: #ff8080;
}

.body {
  display: flex;
  flex-direction: column;
  gap: 4px;
  padding: 6px 4px 4px;
}

.row {
  display: flex;
  align-items: center;
  gap: 4px;
  height: 24px;
}

.row:first-child {
  margin-bottom: 2px;
}

.cube {
  margin: 4px 3px 0;
}

.pick {
  flex: 1;
  min-width: 0;
  height: 24px;
  padding: 0 2px 3px;
  border: 1px solid #a9abb0;
  border-left: 13px solid #ff80c0;
  background: #fff;
}

.pick.purple {
  border-left-color: #8000ff;
}

.pick.green {
  border: 2px solid #5bb0dc;
  border-left: 13px solid #00cc33;
  background: #cde2f8;
}

.tool {
  display: flex;
  align-items: center;
  justify-content: center;
  width: 24px;
  height: 24px;
  border: 1px solid #86888c;
  background: #dfe1e5;
}

.tool.on {
  background: #b4b6ba;
  border: 2px solid #6f7175;
}

.dim {
  font-family: "Liberation Sans", sans-serif;
  font-size: 8px;
}

.value {
  flex: 1;
  min-width: 0;
  height: 22px;
  padding: 0 2px 2px;
  border: 1px solid #b4b6ba;
  background: #e1e3e6;
  color: #7d7e82;
}

.spin {
  display: flex;
  flex-direction: column;
  gap: 1px;
  margin-left: -3px;
}

.spin button {
  display: flex;
  justify-content: center;
  align-items: center;
  width: 17px;
  height: 10px;
  border: 1px solid #c9c9c0;
  border-radius: 2px;
  background: #f1f1ee;
}

.spin button::after {
  content: "";
  width: 5px;
  height: 5px;
  margin-top: 3px;
  border: 1px solid #9c9c98;
  border-right: none;
  border-bottom: none;
  transform: rotate(45deg);
}

.spin .down::after {
  margin-top: -3px;
  transform: rotate(225deg);
}

.check {
  padding-left: 28px;
}

.check input {
  appearance: none;
  width: 13px;
  height: 13px;
  margin: 0;
  border: 1px solid #1f4a80;
  background: linear-gradient(135deg, #dcdcdc, #fff);
}

.check input:disabled {
  border-color: #c4c4b8;
  background: #fdfdfb;
}

.check input:disabled + label {
  color: #77787c;
}

.slim {
  padding: 0 4px 1px;
}

.collapse {
  position: absolute;
  top: 410px;
  right: -9px;
  display: flex;
  flex-direction: column;
  align-items: center;
  justify-content: center;
  gap: 3px;
  width: 9px;
  height: 39px;
  border: 1px solid #222;
  border-left: none;
  background: #e1e4ea;
  z-index: 2;
}

.collapse i {
  border: 3px solid transparent;
  border-right-color: #333;
  border-left: none;
}

/* graphics area */
.viewport {
  position: relative;
  flex: 1;
  min-width: 0;
  overflow: hidden;
  background:
    linear-gradient(rgba(255, 255, 255, 0) 73%, #fff 95%),
    linear-gradient(170deg, #fff 38%, #eceef3 52%, #dfe2eb 64%);
}

.model {
  position: absolute;
  inset: 0;
  width: 100%;
  height: 100%;
}

.tree {
  position: relative;
  margin: 0;
  padding: 3px 0 0 2px;
  width: 210px;
  font-size: 12px;
}

.tree ul {
  position: relative;
  margin: 0 0 0 19px;
  padding: 0;
}

.tree li {
  list-style: none;
}

.tree ul::before {
  content: "";
  position: absolute;
  left: 4px;
  top: 0;
  bottom: 9px;
  border-left: 1px solid #808080;
}

.node {
  position: relative;
  display: flex;
  align-items: center;
  gap: 5px;
  height: 18px;
  padding-left: 15px;
  white-space: nowrap;
}

.node::before {
  content: "";
  position: absolute;
  left: 4px;
  top: 9px;
  width: 10px;
  border-top: 1px solid #808080;
}

.node.selected {
  color: #2be4ee;
}

.toggle {
  position: absolute;
  left: 0;
  top: 5px;
  width: 9px;
  height: 9px;
  border: 1px solid #808080;
  background: linear-gradient(#000, #000) center / 5px 1px no-repeat #fff;
}

.toggle.plus {
  background:
    linear-gradient(#000, #000) center / 5px 1px no-repeat,
    linear-gradient(#000, #000) center / 1px 5px no-repeat #fff;
}

.tag {
  position: absolute;
  left: 22px;
  top: 0;
  font-size: 7px;
  line-height: 8px;
  font-weight: bold;
}
```
